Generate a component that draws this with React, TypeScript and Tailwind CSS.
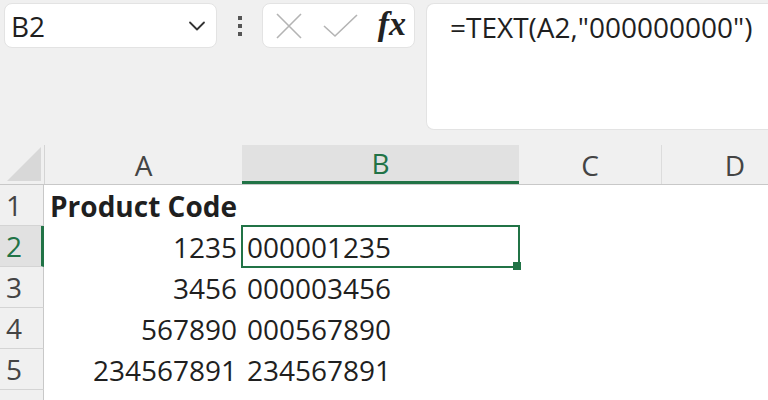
import React from 'react';

const FONT = { fontFamily: '"Open Sans", "Noto Sans", sans-serif' };

const rows: Array<{ n: number; a: string; b: string; bold?: boolean }> = [
  { n: 1, a: 'Product Code', b: '', bold: true },
  { n: 2, a: '1235', b: '000001235' },
  { n: 3, a: '3456', b: '000003456' },
  { n: 4, a: '567890', b: '000567890' },
  { n: 5, a: '234567891', b: '234567891' },
];

const Chevron = () => (
  <svg width="18" height="12" viewBox="0 0 18 12" fill="none">
    <path d="M2 2.5 L9 9.5 L16 2.5" stroke="#333" strokeWidth="1.8" strokeLinecap="round" strokeLinejoin="round" />
  </svg>
);

const Cross = () => (
  <svg width="28" height="28" viewBox="0 0 28 28" fill="none">
    <path d="M2 2 L26 26 M26 2 L2 26" stroke="#b4b4b4" strokeWidth="1.6" />
  </svg>
);

const Check = () => (
  <svg width="36" height="24" viewBox="0 0 36 24" fill="none">
    <path d="M1 12 L12 22 L34 1" stroke="#b4b4b4" strokeWidth="1.6" />
  </svg>
);

export default function App() {
  return (
    <div className="w-[768px] h-[400px] overflow-hidden bg-[#f0f0f0] text-[#1f1f1f]" style={FONT}>
      {/* Toolbar */}
      <div className="flex items-start h-[145px] pt-[3px] pl-[4px]">
        <div className="shrink-0 w-[213px] h-[45px] bg-white rounded-lg border border-[#e3e3e3] flex items-center justify-between pl-[6px] pr-[10px]">
          <span className="text-[28px] leading-none">B2</span>
          <Chevron />
        </div>
        <div className="shrink-0 w-[45px] h-[45px] flex flex-col items-center justify-center gap-[4px]">
          <div className="w-[4px] h-[4px] bg-[#555]" />
          <div className="w-[4px] h-[4px] bg-[#555]" />
          <div className="w-[4px] h-[4px] bg-[#555]" />
        </div>
        <div className="shrink-0 w-[153px] h-[45px] bg-white rounded-lg border border-[#e3e3e3] flex items-center pl-[12px] pr-[8px]">
          <Cross />
          <div className="ml-[20px]">
            <Check />
          </div>
          <span
            className="ml-auto text-[34px] leading-none italic font-bold text-[#222] pb-[4px]"
            style={{ fontFamily: '"Liberation Serif", "DejaVu Serif", serif' }}
          >
            fx
          </span>
        </div>
        <div className="shrink-0 ml-[11px] w-[360px] h-[127px] bg-white rounded-l-lg border border-r-0 border-[#e3e3e3] pl-[23px] pt-[9px]">
          <span className="text-[28px] leading-none whitespace-nowrap">=TEXT(A2,"000000000")</span>
        </div>
      </div>

      {/* Column headers */}
      <div className="flex h-[40px] border-b border-[#c8c8c8] text-[28px] text-[#444]">
        <div className="shrink-0 w-[44px] flex items-end justify-end pr-[3px] pb-[3px]">
          <div
            className="w-[34px] h-[34px] bg-[#d8d8d8]"
            style={{ clipPath: 'polygon(100% 0, 100% 100%, 0 100%)' }}
          />
        </div>
        <div className="shrink-0 w-[198px] flex items-center justify-center border-l border-[#d4d4d4]">A</div>
        <div className="shrink-0 w-[277px] flex items-center justify-center bg-[#e1e1e1] text-[#217346] border-b-[3px] border-[#217346]">
          B
        </div>
        <div className="shrink-0 w-[143px] flex items-center justify-center border-r border-[#dcdcdc]">C</div>
        <div className="shrink-0 w-[146px] flex items-center justify-center">D</div>
      </div>

      {/* Rows */}
      {rows.map((r) => (
        <div key={r.n} className="flex h-[41px] text-[28px]">
          <div
            className={
              r.n === 2
                ? 'shrink-0 w-[44px] flex items-center pl-[6px] bg-[#e1e1e1] text-[#217346] border-b border-[#d4d4d4] border-r-[3px] border-r-[#217346]'
                : 'shrink-0 w-[44px] flex items-center pl-[6px] bg-[#f0f0f0] text-[#444] border-b border-[#d4d4d4] border-r border-r-[#c8c8c8]'
            }
          >
            {r.n}
          </div>
          <div
            className={
              r.bold
                ? 'shrink-0 w-[198px] bg-white flex items-center pl-[6px] font-bold whitespace-nowrap'
                : 'shrink-0 w-[198px] bg-white flex items-center justify-end pr-[5px]'
            }
          >
            {r.a}
          </div>
          <div className="shrink-0 relative w-[277px] bg-white flex items-center pl-[5px]">
            {r.b}
            {r.n === 2 && (
              <>
                <div className="absolute z-10 -left-[1px] -top-[1px] -right-[1px] -bottom-[1px] border-2 border-[#217346]" />
                <div className="absolute z-20 -right-[2px] -bottom-[3px] w-[8px] h-[8px] bg-[#217346]" />
              </>
            )}
          </div>
          <div className="flex-1 bg-white" />
        </div>
      ))}
      <div className="flex h-[20px]">
        <div className="shrink-0 w-[44px] bg-[#f0f0f0] border-r border-[#c8c8c8]" />
        <div className="flex-1 bg-white" />
      </div>
    </div>
  );
}
